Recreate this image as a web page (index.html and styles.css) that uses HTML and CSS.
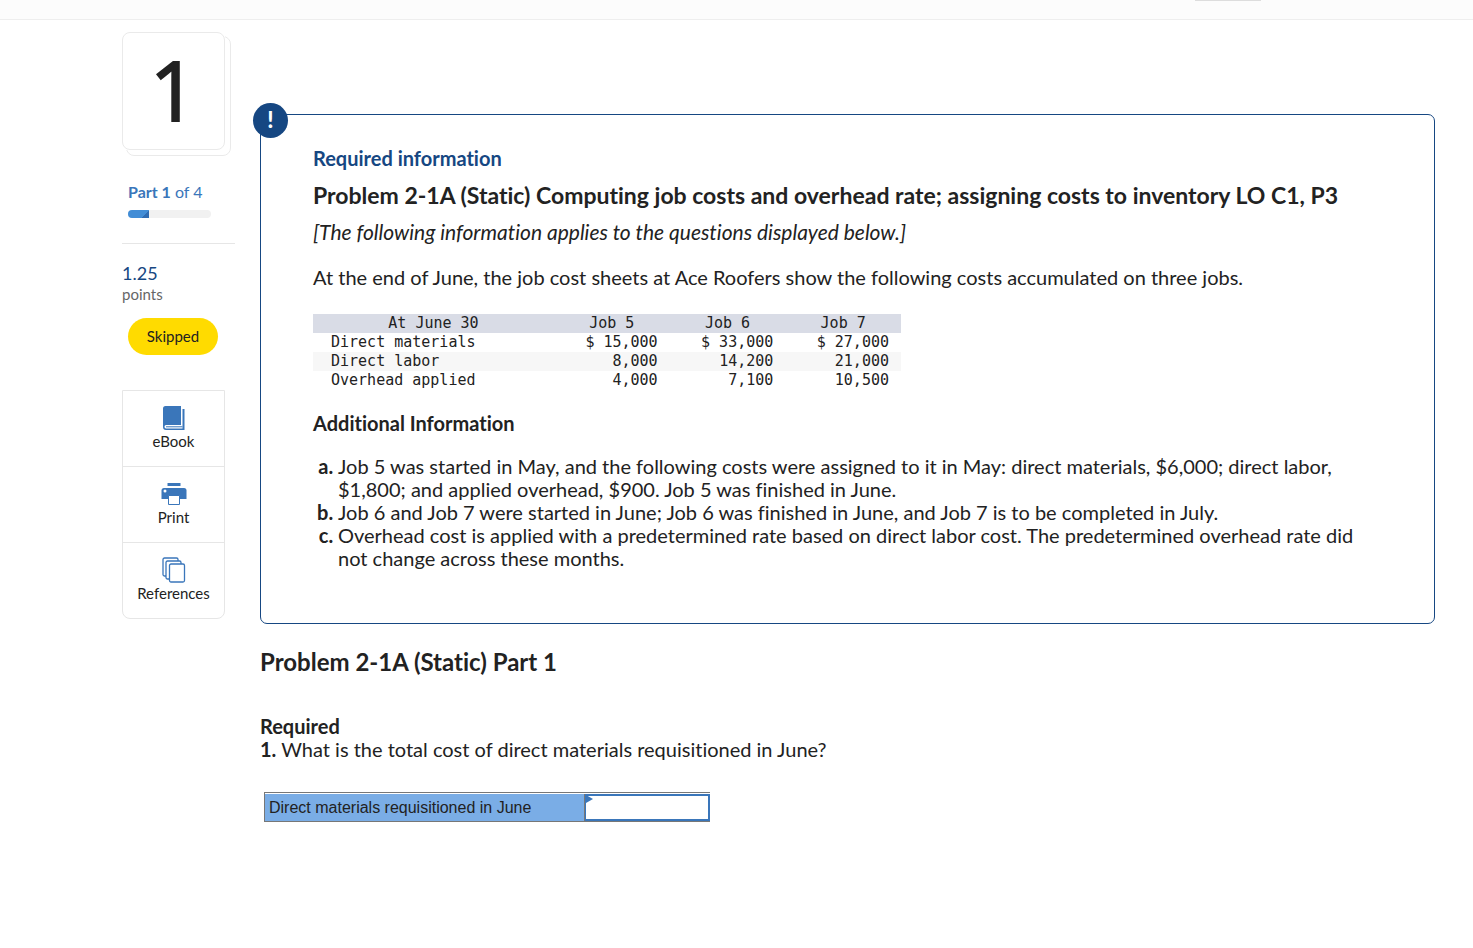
FILE: index.html
```html
<!DOCTYPE html>
<html lang="en">

<head>
    <meta charset="UTF-8">
    <meta name="viewport" content="width=device-width, initial-scale=1.0">
    <title>Problem 2-1A (Static) Part 1</title>
    <link rel="stylesheet" href="styles.css">
</head>

<body>
    <header class="topbar">
        <div class="topbar-tab"></div>
    </header>

    <div class="page">
        <aside class="sidebar">
            <div class="number-card">1</div>

            <div class="part">
                <div class="part-label"><b>Part 1</b> of 4</div>
                <div class="progress">
                    <div class="progress-fill"></div>
                </div>
            </div>

            <div class="points">1.25</div>
            <div class="points-label">points</div>
            <div class="status">Skipped</div>

            <nav class="tools">
                <button class="tool">
                    <svg width="26" height="26" viewBox="0 0 26 26">
                        <path d="M4.500 1H20V20H5.500L2 22V3.500Q2 1 4.500 1Z" fill="#3a76ba" />
                        <path d="M23.500 4V25H5Q2 25 2 22V20H21V4Z" fill="#3a76ba" />
                        <path d="M20 1H21.500V20H20Z" fill="#fff" />
                        <path d="M5 20H21.500V23.500H5Q3.500 23.500 3.500 21.800T5 20Z" fill="#fff" />
                        <path d="M5 21.800H21.500" stroke="#3a76ba" />
                    </svg>
                    eBook
                </button>
                <button class="tool">
                    <svg width="26" height="26" viewBox="0 0 26 26">
                        <path d="M6.500 2H19.500V5H6.500Z" fill="#3a76ba" />
                        <path d="M3 7H23Q25.500 7 25.500 9.500V18H.5V9.500Q.5 7 3 7Z" fill="#3a76ba" />
                        <circle cx="4" cy="10" r="1.500" fill="#fff" />
                        <path d="M7.500 14.500H18.500V23.500H7.500Z" fill="#fff" stroke="#3a76ba" />
                    </svg>
                    Print
                </button>
                <button class="tool">
                    <svg width="26" height="26" viewBox="0 0 26 26" fill="#fff" stroke="#3a76ba" stroke-width="1.300">
                        <rect x="2" y="1" width="15" height="18" rx="1.500" />
                        <rect x="5" y="4" width="15" height="18" rx="1.500" />
                        <rect x="8.500" y="7" width="15" height="18" rx="1.500" />
                    </svg>
                    References
                </button>
            </nav>
        </aside>

        <main class="content">
            <section class="info">
                <div class="info-badge">!</div>
                <h2 class="info-label">Required information</h2>
                <h1 class="title">Problem 2-1A (Static) Computing job costs and overhead rate; assigning costs to inventory LO C1, P3</h1>
                <p class="note">[The following information applies to the questions displayed below.]</p>
                <p class="intro">At the end of June, the job cost sheets at Ace Roofers show the following costs accumulated on three jobs.</p>

                <table class="costs">
                    <thead>
                        <tr>
                            <th class="costs-name">At June 30</th>
                            <th>Job 5</th>
                            <th>Job 6</th>
                            <th>Job 7</th>
                        </tr>
                    </thead>
                    <tbody>
                        <tr>
                            <td>Direct materials</td>
                            <td>$ 15,000</td>
                            <td>$ 33,000</td>
                            <td>$ 27,000</td>
                        </tr>
                        <tr>
                            <td>Direct labor</td>
                            <td>8,000</td>
                            <td>14,200</td>
                            <td>21,000</td>
                        </tr>
                        <tr>
                            <td>Overhead applied</td>
                            <td>4,000</td>
                            <td>7,100</td>
                            <td>10,500</td>
                        </tr>
                    </tbody>
                </table>

                <h3 class="subtitle">Additional Information</h3>
                <ol class="facts">
                    <li>Job 5 was started in May, and the following costs were assigned to it in May: direct materials, $6,000; direct labor, $1,800; and applied overhead, $900. Job 5 was finished in June.</li>
                    <li>Job 6 and Job 7 were started in June; Job 6 was finished in June, and Job 7 is to be completed in July.</li>
                    <li>Overhead cost is applied with a predetermined rate based on direct labor cost. The predetermined overhead rate did not change across these months.</li>
                </ol>
            </section>

            <section class="question">
                <h2 class="title">Problem 2-1A (Static) Part 1</h2>
                <h3 class="subtitle">Required</h3>
                <p><b>1.</b> What is the total cost of direct materials requisitioned in June?</p>

                <div class="answer">
                    <label class="answer-label" for="answer">Direct materials requisitioned in June</label>
                    <div class="answer-cell">
                        <input type="text" id="answer">
                    </div>
                </div>
            </section>
        </main>
    </div>
</body>

</html>
```
FILE: styles.css
```css
* {
    box-sizing: border-box;
}

body {
    margin: 0;
    background-color: #fff;
    color: #222;
    font-family: Lato, "Liberation Sans", sans-serif;
    font-size: 20px;
    font-variant-ligatures: none;
    line-height: 23px;
}

h1,
h2,
h3,
p {
    margin: 0;
}

.topbar {
    display: flex;
    justify-content: flex-end;
    height: 20px;
    padding-right: 212px;
    background-color: #fcfcfc;
    border-bottom: 1px solid #eee;
}

.topbar-tab {
    width: 66px;
    height: 1px;
    background-color: #ddd;
}

.page {
    display: flex;
    gap: 25px;
    padding: 12px 38px 0 122px;
}

/* left column */
.sidebar {
    flex: none;
    width: 113px;
}

.number-card {
    position: relative;
    width: 103px;
    height: 118px;
    background-color: #fff;
    border: 1px solid #eaeaea;
    border-radius: 8px;
    font-family: "Open Sans", sans-serif;
    font-size: 82px;
    line-height: 112px;
    text-align: center;
    -webkit-text-stroke: 2px #222;
}

/* second sheet showing behind the card */
.number-card::after {
    content: "";
    position: absolute;
    top: 3px;
    left: 3px;
    box-sizing: border-box;
    width: 105px;
    height: 120px;
    border: 1px solid #eaeaea;
    border-radius: 8px;
    clip-path: polygon(0 114px, 99px 114px, 99px 0, 100% 0, 100% 100%, 0 100%);
}

.part {
    padding: 30px 0 25px 6px;
    border-bottom: 1px solid #e6e6e6;
    color: #3a76ba;
    font-size: 16px;
}

.progress {
    width: 83px;
    height: 8px;
    margin-top: 7px;
    background-color: #f1f1f1;
    border-radius: 4px;
    overflow: hidden;
}

.progress-fill {
    width: 25%;
    height: 8px;
    background: linear-gradient(135deg, #428dd6 75%, #2f6cb3 75%);
}

.points {
    margin-top: 18px;
    color: #164782;
    font-size: 18px;
}

.points-label {
    color: #666;
    font-size: 15px;
    line-height: 19px;
}

.status {
    width: 90px;
    margin: 14px 0 35px 6px;
    padding-bottom: 1px;
    background-color: #ffdb00;
    border-radius: 19px;
    font-size: 15px;
    line-height: 36px;
    text-align: center;
}

.tools {
    width: 103px;
    border: 1px solid #e6e6e6;
    border-radius: 0 0 8px 8px;
}

.tool {
    display: flex;
    flex-direction: column;
    align-items: center;
    width: 100%;
    height: 76px;
    padding: 14px 0 0;
    background: none;
    border: none;
    border-bottom: 1px solid #e6e6e6;
    color: #222;
    font-family: inherit;
    font-size: 15px;
    line-height: 20px;
}

.tool:last-child {
    height: 75px;
    border-bottom: none;
}

/* right column */
.content {
    flex: 1;
    min-width: 0;
    padding-top: 82px;
}

.info {
    position: relative;
    padding: 32px 53px 53px 52px;
    border: 1px solid #164782;
    border-radius: 7px;
}

.info-badge {
    position: absolute;
    top: -12px;
    left: -8px;
    width: 35px;
    height: 35px;
    background-color: #164782;
    border-radius: 50%;
    color: #fff;
    font-size: 22px;
    font-weight: 900;
    line-height: 33px;
    text-align: center;
}

.info-label {
    color: #164782;
    font-size: 20px;
}

.title {
    font-size: 24px;
    line-height: 24px;
}

.info .title {
    margin: 13px 0;
    font-size: 23px;
}

.note {
    font-size: 21px;
    font-style: italic;
}

.intro {
    margin: 23px 0 25px;
}

.costs {
    width: 588px;
    border-collapse: collapse;
    table-layout: fixed;
    font-family: "DejaVu Sans Mono", monospace;
    font-size: 15px;
    line-height: 19px;
}

.costs th {
    padding: 0;
    background-color: #d9dce6;
    font-weight: normal;
}

.costs .costs-name {
    width: 241px;
}

.costs td {
    padding: 0 12px 0 0;
    text-align: right;
}

.costs td:first-child {
    padding: 0 0 0 18px;
    text-align: left;
}

.costs tbody tr:nth-child(even) {
    background-color: #f7f7f7;
}

.subtitle {
    font-size: 20px;
}

.info .subtitle {
    margin: 22px 0 20px;
}

.facts {
    margin: 0;
    padding-left: 25px;
    list-style: lower-alpha;
}

.facts li::marker {
    font-weight: bold;
}

.question {
    padding-top: 26px;
}

.question .subtitle {
    margin-top: 41px;
}

.answer {
    display: flex;
    width: 446px;
    margin: 31px 0 0 4px;
    padding-top: 1px;
    border: 1px solid #777;
    border-right: none;
    font-family: "Liberation Sans", Arial, sans-serif;
    font-size: 16px;
    line-height: 27px;
}

.answer-label {
    flex: 1;
    padding-left: 4px;
    background-color: #7aade6;
    border-right: 1px solid #777;
}

.answer-cell {
    position: relative;
    width: 125px;
}

/* corner flag of the active cell */
.answer-cell::before {
    content: "";
    position: absolute;
    top: 1px;
    left: 1px;
    border: 4px solid transparent;
    border-left: 7px solid #3a76ba;
    border-right: none;
}

.answer-cell input {
    display: block;
    width: 100%;
    height: 27px;
    padding: 0 8px;
    background-color: #fff;
    border: 2px solid #3a76ba;
    border-left-width: 1px;
    outline: none;
    font: inherit;
}
```
